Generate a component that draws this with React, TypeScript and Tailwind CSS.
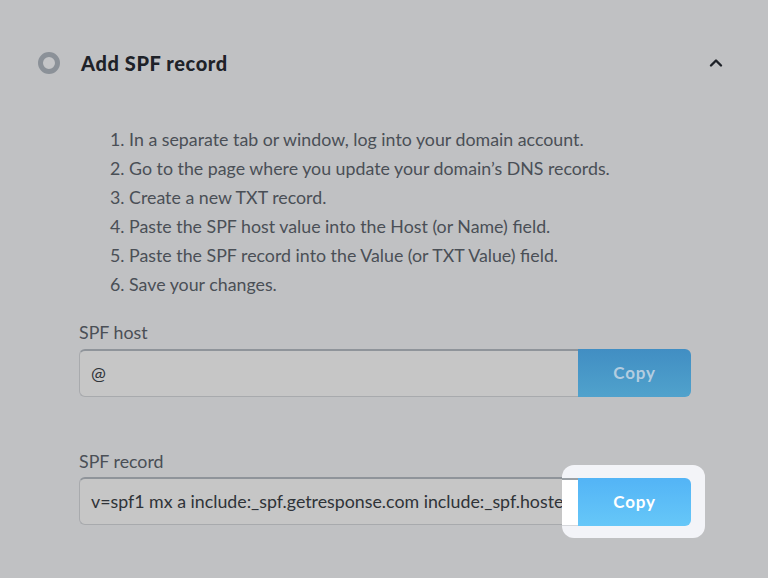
import { useState } from "react";

const steps = [
  "In a separate tab or window, log into your domain account.",
  "Go to the page where you update your domain\u2019s DNS records.",
  "Create a new TXT record.",
  "Paste the SPF host value into the Host (or Name) field.",
  "Paste the SPF record into the Value (or TXT Value) field.",
  "Save your changes.",
];

export default function App() {
  const [open] = useState(true);

  return (
    <div
      className="w-[768px] h-[578px] overflow-hidden bg-[#c0c1c3] text-[#4a4f56]"
      style={{ fontFamily: "Lato, 'Open Sans', sans-serif" }}
    >
      {/* header */}
      <div className="flex items-center h-[26px] mt-[50px] pl-[38px] pr-[44px]">
        <div className="w-[22px] h-[22px] rounded-full border-[5px] border-[#8b9198] bg-[#c4c5c7]" />
        <h2 className="ml-[21px] text-[20px] font-black tracking-[0.6px] text-[#1e2228]">
          Add SPF record
        </h2>
        <svg
          className="ml-auto"
          width="16"
          height="16"
          viewBox="0 0 16 16"
          fill="none"
          stroke="#1e2228"
          strokeWidth="2.4"
          strokeLinecap="round"
          strokeLinejoin="round"
        >
          <path d="M3 10.5 8 5.5 13 10.5" />
        </svg>
      </div>

      {open && (
        <div className="pl-[79px] pr-[77px]">
          <ol className="mt-[49px] pl-[31px] text-[17.8px] leading-[29px]">
            {steps.map((s, i) => (
              <li key={i}>
                {i + 1}. {s}
              </li>
            ))}
          </ol>

          {/* SPF host */}
          <div className="mt-[21px] text-[17.8px] leading-[24px]">SPF host</div>
          <div className="mt-[5px] flex h-[48px]">
            <div className="flex-1 flex items-center pl-[11px] rounded-l-[6px] bg-[#c6c6c6] border border-[#a8aaad] border-t-[2px] border-t-[#8f949a] border-r-0 text-[17.8px] text-[#2f3338]">
              @
            </div>
            <button className="w-[113px] rounded-r-[6px] bg-gradient-to-b from-[#418ec3] to-[#50a2cc] text-[17px] font-bold tracking-[0.8px] text-[#b3cde0]">
              Copy
            </button>
          </div>

          {/* SPF record */}
          <div className="mt-[52px] text-[17.8px] leading-[24px]">SPF record</div>
          <div className="relative mt-[4px] flex h-[48px]">
            <div className="flex-1 flex items-center overflow-hidden whitespace-nowrap pl-[11px] rounded-l-[6px] bg-[#c6c6c6] border border-[#a8aaad] border-t-[2px] border-t-[#8f949a] border-r-0 text-[17.8px] text-[#2f3338]">
              v=spf1 mx a include:_spf.getresponse.com include:_spf.hostedemail.com ~all
            </div>
            <div className="w-[113px]" />
            {/* spotlight over the copy button */}
            <div className="absolute right-[-14px] top-[-12px] w-[143px] h-[73px] rounded-[12px] bg-[#f3f4f8] flex items-center overflow-hidden">
              <div className="w-[16px] h-[48px] bg-white border-t-[2px] border-t-[#9aa0a6] border-b border-b-[#d6d8dc]" />
              <button className="w-[113px] h-[48px] rounded-r-[6px] bg-gradient-to-b from-[#53b4f6] to-[#66c7f8] text-[17px] font-bold tracking-[0.8px] text-white">
                Copy
              </button>
            </div>
          </div>
        </div>
      )}
    </div>
  );
}
